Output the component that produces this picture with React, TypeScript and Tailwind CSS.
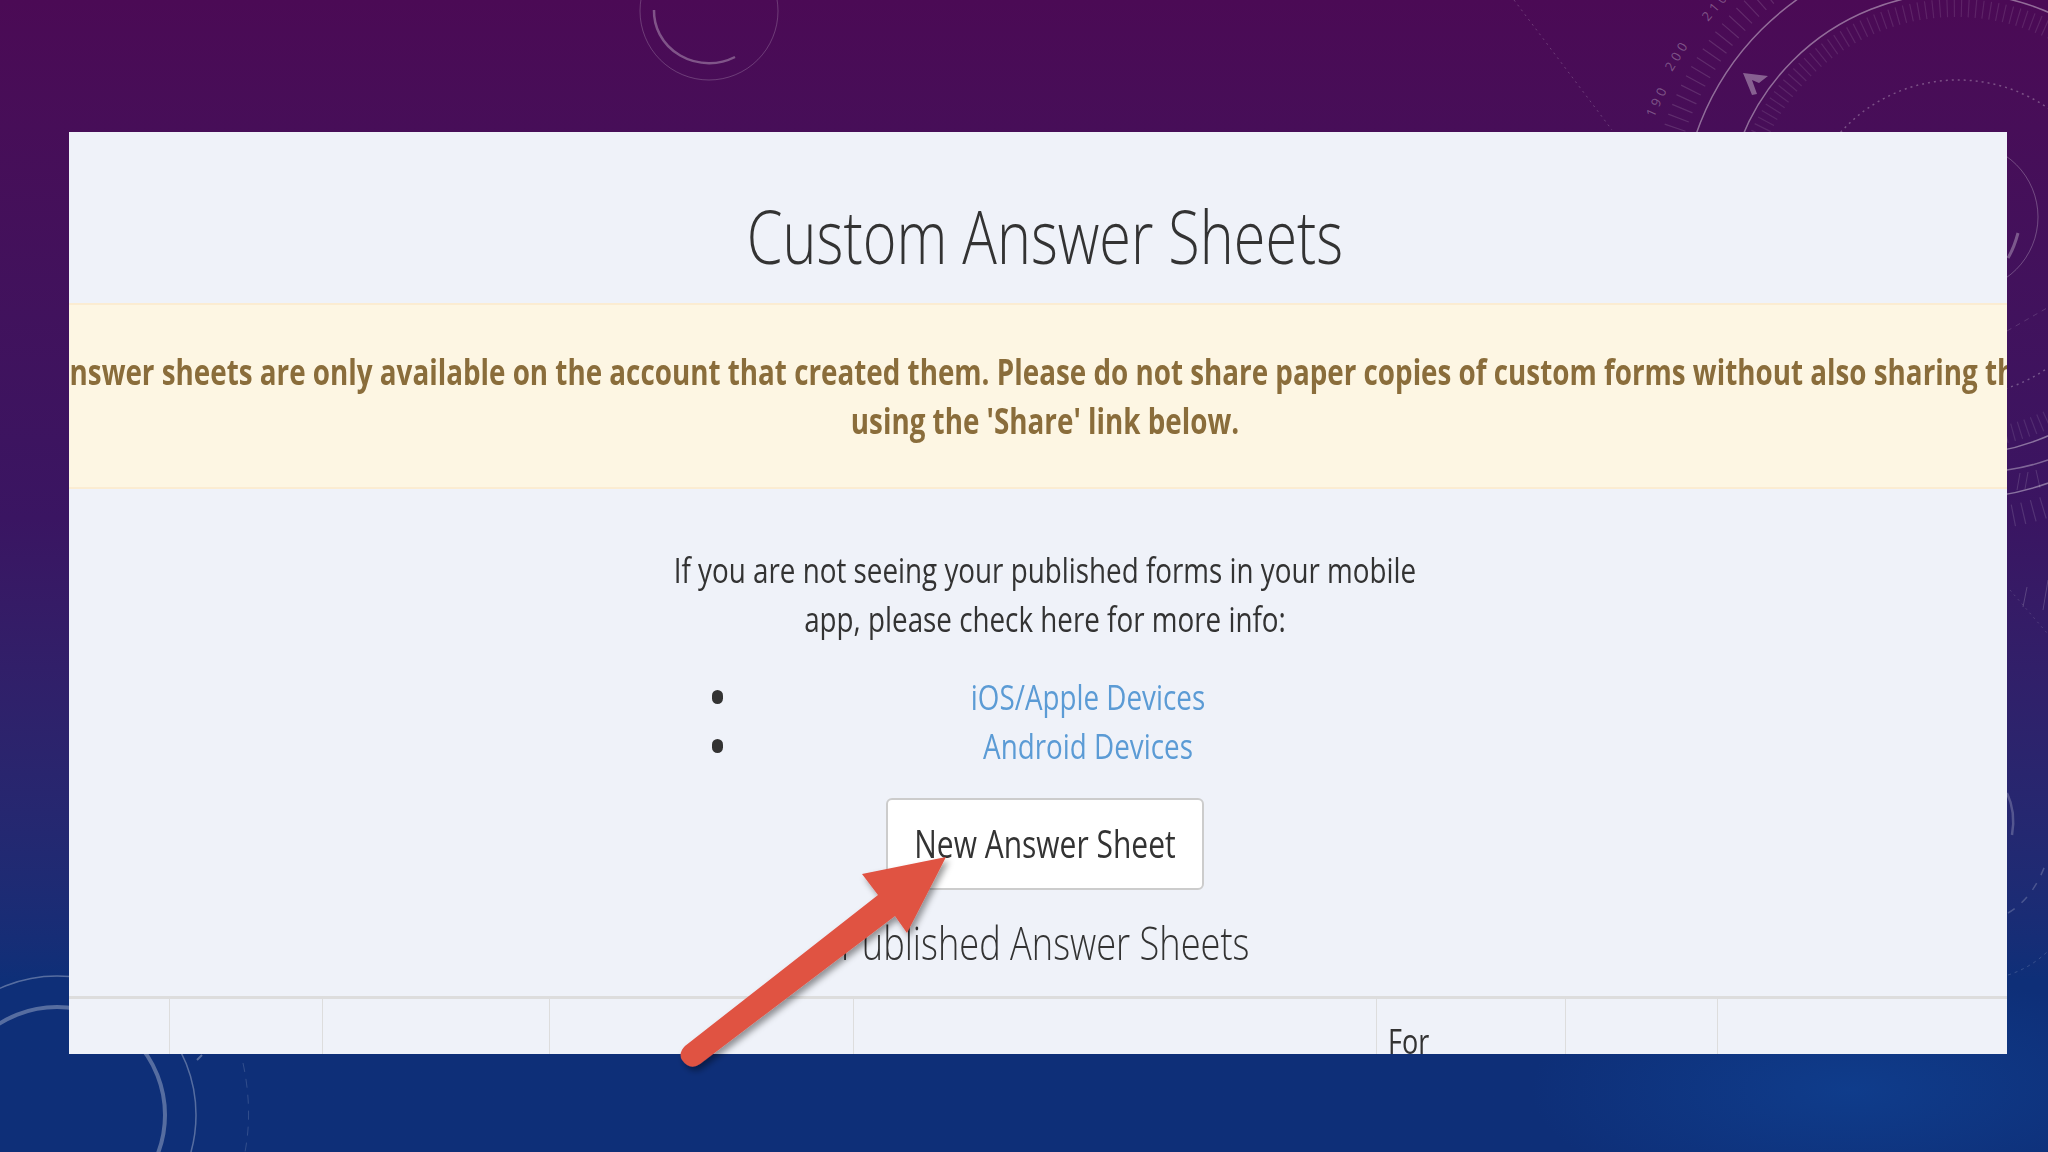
import React from 'react';

// The screenshot is a stretched slide, so text is tall for its width
const Tall = ({ children, className = '' }: { children: React.ReactNode; className?: string }) => (
  <span className={`inline-block whitespace-nowrap scale-y-[1.27] ${className}`}>{children}</span>
);

const columns = [101, 153, 227, 304, 523, 189, 152, 303];

const Decorations = () => (
  <svg className="absolute inset-0" width="2048" height="1152" viewBox="0 0 2048 1152" fill="none">
    <defs>
      <radialGradient id="glow">
        <stop offset="0%" stopColor="#1150a8" stopOpacity="0.4" />
        <stop offset="100%" stopColor="#1150a8" stopOpacity="0" />
      </radialGradient>
    </defs>
    <ellipse cx="1850" cy="1090" rx="320" ry="120" fill="url(#glow)" />
    <g stroke="#ffffff">
      {/* top dial */}
      <circle cx="709" cy="11" r="69" strokeOpacity="0.2" />
      <path d="M654 10 A55 52 0 0 0 735 57" strokeOpacity="0.3" strokeWidth="2.5" />

      {/* right dial */}
      <circle cx="1956" cy="224" r="275" strokeOpacity="0.4" strokeWidth="1.5" />
      <circle cx="1956" cy="224" r="231" strokeOpacity="0.4" strokeWidth="1.5" />
      <circle cx="1956" cy="224" r="297" strokeOpacity="0.13" strokeWidth="22" strokeDasharray="1.2 9" />
      <circle cx="1956" cy="224" r="216" strokeOpacity="0.1" strokeWidth="18" strokeDasharray="1.2 6" />
      <circle cx="1958" cy="238" r="158" strokeOpacity="0.28" strokeWidth="1.5" strokeDasharray="2 4" />
      <circle cx="1964" cy="217" r="74" strokeOpacity="0.25" />
      <path d="M2018 233 Q2014 248 2008 258" strokeOpacity="0.3" strokeWidth="3" />
      <path d="M1514 0 L1612 130" strokeOpacity="0.2" strokeDasharray="2 4" />

      {/* right edge scraps */}
      <path d="M2007 331 L2047 308" strokeOpacity="0.14" strokeDasharray="5 5" />
      <path d="M2007 470 Q2028 467 2048 460" strokeOpacity="0.35" strokeWidth="1.5" />
      <path d="M2017 490 L2020 473 M2025 489 L2028 472 M2040 488 L2036 470" strokeOpacity="0.14" />
      <path d="M2023 607 L2027 587 M2043 610 L2048 580" strokeOpacity="0.18" />
      <path d="M2010 590 L2047 633" strokeOpacity="0.14" strokeDasharray="2 4" />
      <path d="M2007 793 Q2016 812 2012 835" strokeOpacity="0.22" strokeWidth="2.5" />
      <path d="M2008 913 Q2034 898 2047 860" strokeOpacity="0.2" strokeWidth="1.5" strokeDasharray="8 9" />
      <path d="M2008 975 Q2030 968 2047 952" strokeOpacity="0.16" strokeDasharray="3 4" />

      {/* bottom left dial */}
      <circle cx="57" cy="1115" r="108" strokeOpacity="0.3" strokeWidth="4" />
      <circle cx="57" cy="1115" r="139" strokeOpacity="0.3" strokeWidth="1.5" />
      <path d="M243 1063 Q253 1110 245 1152" strokeOpacity="0.15" strokeDasharray="9 7" />
      <path d="M197 1060 L202 1055" strokeOpacity="0.3" strokeWidth="2" />
    </g>
    <path d="M1743 73 L1768 76 L1759 83 L1752 80 L1757 94 L1752 95 Z" fill="#ffffff" fillOpacity="0.35" />
    <g fill="#ffffff" fillOpacity="0.3" fontSize="13" letterSpacing="4" fontFamily="'Open Sans', sans-serif">
      <text x="1654" y="118" transform="rotate(-65 1654 118)">190</text>
      <text x="1672" y="72" transform="rotate(-58 1672 72)">200</text>
      <text x="1708" y="22" transform="rotate(-50 1708 22)">210</text>
    </g>
  </svg>
);

const Arrow = () => (
  <svg className="absolute inset-0 pointer-events-none" width="2048" height="1152" viewBox="0 0 2048 1152" fill="none">
    <defs>
      <filter id="arrowShadow" x="-10%" y="-10%" width="125%" height="125%">
        <feDropShadow dx="3" dy="4" stdDeviation="3" floodColor="#000000" floodOpacity="0.4" />
      </filter>
    </defs>
    <path
      d="M946 857 L862 874 L878 895 L685 1046 Q678 1053 682 1060 Q690 1071 700 1064 L895 916 L907 933 Z"
      fill="#e05243"
      filter="url(#arrowShadow)"
    />
  </svg>
);

const App = () => {
  return (
    <div className="relative w-[2048px] h-[1152px] overflow-hidden pt-[132px] pl-[69px] bg-linear-to-b from-[#4b0a55] via-[#3a1562] via-45% to-[#0e2f78] to-85% font-['Open_Sans',sans-serif]">
      <Decorations />

      <div className="relative w-[1938px] h-[922px] overflow-hidden bg-[#eff2f9]">
        <div className="w-[1952px]">
          <div className="h-[171px] flex justify-center items-center pt-[37px] text-[57.6px] font-light text-[#333333]">
            <Tall>Custom Answer Sheets</Tall>
          </div>

          <div className="h-[186px] flex flex-col justify-center bg-[#fdf6e3] border-y-2 border-[#fbecd2] text-[27.8px] font-bold text-[#8a6d3b]">
            <div className="flex justify-center pr-[44px] leading-[49px]">
              <Tall>Custom answer sheets are only available on the account that created them. Please do not share paper copies of custom forms without also sharing the form</Tall>
            </div>
            <div className="flex justify-center leading-[49px]">
              <Tall>using the 'Share' link below.</Tall>
            </div>
          </div>

          <div className="w-[742px] mx-auto mt-[56px] text-[27.8px] text-[#333333]">
            <div className="flex justify-center leading-[49px]">
              <Tall>If you are not seeing your published forms in your mobile</Tall>
            </div>
            <div className="flex justify-center leading-[49px]">
              <Tall>app, please check here for more info:</Tall>
            </div>

            <ul className="mt-[29px] pl-[38px]">
              {['iOS/Apple Devices', 'Android Devices'].map(label => (
                <li key={label} className="flex items-center gap-[37px] leading-[49px]">
                  <span className="w-[11px] h-[14px] rounded-full bg-[#333333]" />
                  <a className="flex-1 text-center text-[#5b9bd5]">
                    <Tall>{label}</Tall>
                  </a>
                </li>
              ))}
            </ul>
          </div>

          <div className="flex justify-center mt-[28px]">
            <button className="w-[318px] h-[92px] pb-[2px] bg-white border-2 border-[#cccccc] rounded-[6px] text-[30px] text-[#333333]">
              <Tall>New Answer Sheet</Tall>
            </button>
          </div>

          <div className="h-[60px] mt-[22px] flex justify-center items-center text-[36.2px] font-light text-[#333333]">
            <Tall>Published Answer Sheets</Tall>
          </div>

          <div className="flex mt-[24px] border-t-[3px] border-[#dddddd] h-[60px]">
            {columns.map((width, i) => (
              <div
                key={i}
                style={{ width }}
                className="shrink-0 border-r border-[#dddddd] pl-[11px] pt-[17px] text-[27px] leading-[49px] text-[#333333]"
              >
                {i === 5 && <Tall>For</Tall>}
              </div>
            ))}
          </div>
        </div>
      </div>

      <Arrow />
    </div>
  );
};

export default App;
